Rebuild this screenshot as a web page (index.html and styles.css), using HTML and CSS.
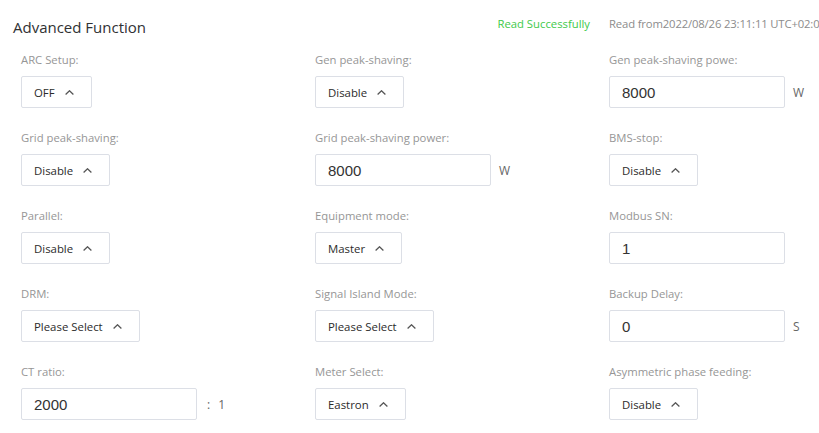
FILE: index.html
```html
<!DOCTYPE html>
<html>
<head>
<meta charset="utf-8">
<link rel="stylesheet" href="styles.css">
</head>
<body>
<div class="page">
  <header class="header">
    <div class="head-main">
      <h1 class="title">Advanced Function</h1>
      <span class="status ok">Read Successfully</span>
    </div>
    <span class="status time">Read from2022/08/26 23:11:11 UTC+02:00</span>
  </header>

  <div class="grid">
    <div class="field">
      <div class="label">ARC Setup:</div>
      <div class="control"><div class="select"><span>OFF</span><svg class="chev" width="9" height="5" viewBox="0 0 9 5"><polyline points="0.6,4.5 4.5,0.7 8.4,4.5"/></svg></div></div>
    </div>
    <div class="field">
      <div class="label">Gen peak-shaving:</div>
      <div class="control"><div class="select"><span>Disable</span><svg class="chev" width="9" height="5" viewBox="0 0 9 5"><polyline points="0.6,4.5 4.5,0.7 8.4,4.5"/></svg></div></div>
    </div>
    <div class="field">
      <div class="label">Gen peak-shaving powe:</div>
      <div class="control"><input class="input" type="text" value="8000"><span class="unit">W</span></div>
    </div>

    <div class="field">
      <div class="label">Grid peak-shaving:</div>
      <div class="control"><div class="select"><span>Disable</span><svg class="chev" width="9" height="5" viewBox="0 0 9 5"><polyline points="0.6,4.5 4.5,0.7 8.4,4.5"/></svg></div></div>
    </div>
    <div class="field">
      <div class="label">Grid peak-shaving power:</div>
      <div class="control"><input class="input" type="text" value="8000"><span class="unit">W</span></div>
    </div>
    <div class="field">
      <div class="label">BMS-stop:</div>
      <div class="control"><div class="select"><span>Disable</span><svg class="chev" width="9" height="5" viewBox="0 0 9 5"><polyline points="0.6,4.5 4.5,0.7 8.4,4.5"/></svg></div></div>
    </div>

    <div class="field">
      <div class="label">Parallel:</div>
      <div class="control"><div class="select"><span>Disable</span><svg class="chev" width="9" height="5" viewBox="0 0 9 5"><polyline points="0.6,4.5 4.5,0.7 8.4,4.5"/></svg></div></div>
    </div>
    <div class="field">
      <div class="label">Equipment mode:</div>
      <div class="control"><div class="select"><span>Master</span><svg class="chev" width="9" height="5" viewBox="0 0 9 5"><polyline points="0.6,4.5 4.5,0.7 8.4,4.5"/></svg></div></div>
    </div>
    <div class="field">
      <div class="label">Modbus SN:</div>
      <div class="control"><input class="input" type="text" value="1"></div>
    </div>

    <div class="field">
      <div class="label">DRM:</div>
      <div class="control"><div class="select"><span>Please Select</span><svg class="chev" width="9" height="5" viewBox="0 0 9 5"><polyline points="0.6,4.5 4.5,0.7 8.4,4.5"/></svg></div></div>
    </div>
    <div class="field">
      <div class="label">Signal Island Mode:</div>
      <div class="control"><div class="select"><span>Please Select</span><svg class="chev" width="9" height="5" viewBox="0 0 9 5"><polyline points="0.6,4.5 4.5,0.7 8.4,4.5"/></svg></div></div>
    </div>
    <div class="field">
      <div class="label">Backup Delay:</div>
      <div class="control"><input class="input" type="text" value="0"><span class="unit">S</span></div>
    </div>

    <div class="field">
      <div class="label">CT ratio:</div>
      <div class="control"><input class="input" type="text" value="2000"><span class="unit ratio"><span>:</span><span>1</span></span></div>
    </div>
    <div class="field">
      <div class="label">Meter Select:</div>
      <div class="control"><div class="select"><span>Eastron</span><svg class="chev" width="9" height="5" viewBox="0 0 9 5"><polyline points="0.6,4.5 4.5,0.7 8.4,4.5"/></svg></div></div>
    </div>
    <div class="field">
      <div class="label">Asymmetric phase feeding:</div>
      <div class="control"><div class="select"><span>Disable</span><svg class="chev" width="9" height="5" viewBox="0 0 9 5"><polyline points="0.6,4.5 4.5,0.7 8.4,4.5"/></svg></div></div>
    </div>
  </div>
</div>
</body>
</html>
```

FILE: styles.css
```css
html, body {
  margin: 0;
  padding: 0;
  background: #ffffff;
}

body {
  font-family: "Open Sans", "Noto Sans", sans-serif;
  color: #333333;
  overflow: hidden;
  width: 819px;
  height: 433px;
}

.page {
  width: 819px;
}

.header {
  display: grid;
  grid-template-columns: 596px auto;
  padding: 16px 0 0 13px;
  height: 34px;
  align-items: start;
  white-space: nowrap;
  overflow: hidden;
}

.head-main {
  display: flex;
  justify-content: space-between;
  align-items: flex-start;
  padding-right: 19px;
}

.title {
  margin: 0;
  font-size: 15px;
  font-weight: 400;
  line-height: 22px;
  color: #303133;
}

.status {
  font-size: 11.3px;
  line-height: 16px;
}

.status.ok {
  color: #3ec94a;
}

.status.time {
  color: #8c8c8c;
  letter-spacing: -0.15px;
}

.grid {
  display: grid;
  grid-template-columns: repeat(3, 294px);
  row-gap: 20px;
  padding-left: 21px;
}

.label {
  font-size: 11.3px;
  line-height: 20px;
  color: #969696;
  margin-bottom: 6px;
  white-space: nowrap;
}

.control {
  display: flex;
  align-items: center;
  height: 32px;
}

.select {
  display: inline-flex;
  align-items: center;
  box-sizing: border-box;
  height: 32px;
  padding: 0 17px 0 12px;
  border: 1px solid #dcdfe6;
  border-radius: 2px;
  font-size: 11.4px;
  color: #2b2b2b;
  white-space: nowrap;
}

.chev {
  margin-left: 10px;
  fill: none;
  stroke: #555555;
  stroke-width: 1.2;
}

.input {
  box-sizing: border-box;
  width: 176px;
  height: 32px;
  margin: 0;
  padding: 0 12px;
  border: 1px solid #dcdfe6;
  border-radius: 2px;
  font-family: "Liberation Sans", Arial, sans-serif;
  font-size: 15px;
  color: #333333;
  background: #ffffff;
  outline: none;
}

.unit {
  margin-left: 8px;
  font-size: 12px;
  color: #666666;
}

.ratio {
  display: inline-flex;
  gap: 8px;
  margin-left: 10px;
}
```
